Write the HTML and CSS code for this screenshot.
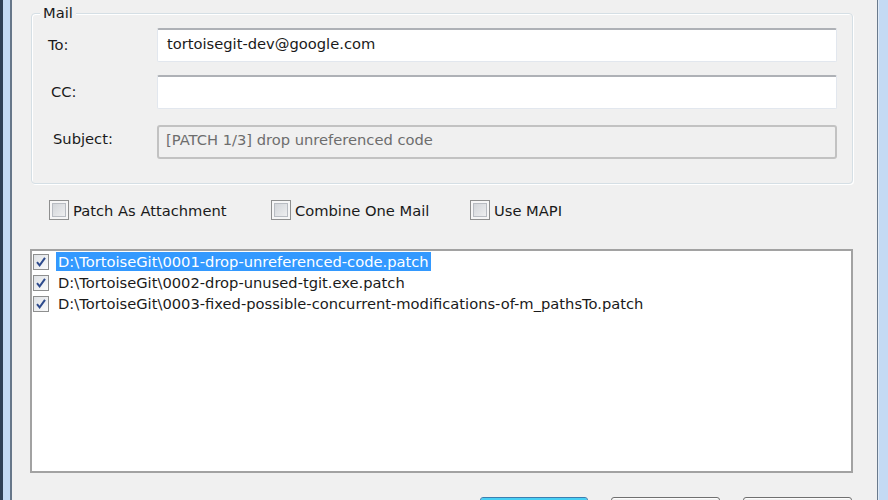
FILE: index.html
```html
<!DOCTYPE html>
<html>
<head>
<meta charset="utf-8">
<link rel="stylesheet" href="styles.css">
</head>
<body>
<div class="window">
  <div class="edge-left"></div>
  <div class="dialog">
    <div class="group">
      <span class="legend">Mail</span>
      <div class="row row-to">
        <span class="label label-to">To:</span>
        <div class="input">tortoisegit-dev@google.com</div>
      </div>
      <div class="row row-cc">
        <span class="label label-cc">CC:</span>
        <div class="input"></div>
      </div>
      <div class="row row-subject">
        <span class="label label-subject">Subject:</span>
        <div class="input disabled">[PATCH 1/3] drop unreferenced code</div>
      </div>
    </div>
    <div class="options">
      <label class="opt opt-1"><span class="cb"></span>Patch As Attachment</label>
      <label class="opt opt-2"><span class="cb"></span>Combine One Mail</label>
      <label class="opt opt-3"><span class="cb"></span>Use MAPI</label>
    </div>
    <div class="list">
      <div class="item">
        <span class="lcb"><svg width="14" height="14" viewBox="0 0 14 14"><path d="M3 7.2 L5.6 10.3 L11 2.8" fill="none" stroke="#2d4a8c" stroke-width="2"/></svg></span>
        <span class="text selected">D:\TortoiseGit\0001-drop-unreferenced-code.patch</span>
      </div>
      <div class="item">
        <span class="lcb"><svg width="14" height="14" viewBox="0 0 14 14"><path d="M3 7.2 L5.6 10.3 L11 2.8" fill="none" stroke="#2d4a8c" stroke-width="2"/></svg></span>
        <span class="text">D:\TortoiseGit\0002-drop-unused-tgit.exe.patch</span>
      </div>
      <div class="item">
        <span class="lcb"><svg width="14" height="14" viewBox="0 0 14 14"><path d="M3 7.2 L5.6 10.3 L11 2.8" fill="none" stroke="#2d4a8c" stroke-width="2"/></svg></span>
        <span class="text">D:\TortoiseGit\0003-fixed-possible-concurrent-modifications-of-m_pathsTo.patch</span>
      </div>
    </div>
    <div class="buttons">
      <div class="btn default"></div>
      <div class="btn"></div>
      <div class="btn"></div>
    </div>
  </div>
  <div class="edge-right"></div>
</div>
</body>
</html>
```
FILE: styles.css
```css
html, body {
  margin: 0;
  padding: 0;
  width: 888px;
  height: 500px;
  overflow: hidden;
  background: #f0f0f0;
  font-family: "DejaVu Sans", Verdana, sans-serif;
  font-size: 14.7px;
  color: #1a1a1a;
}

.window {
  display: flex;
  height: 500px;
}

.edge-left {
  width: 12px;
  flex: none;
  background: linear-gradient(to right, #2f4055 0 3px, #c4daf3 3px 10px, #66778a 10px 12px);
}

.edge-right {
  width: 11px;
  flex: none;
  background: linear-gradient(to right, #6a7a8c 0 1px, #dfeaf7 1px 2px, #c4daf3 2px 11px);
}

.dialog {
  flex: 1;
  padding: 13px 0 0 19px;
  display: flex;
  flex-direction: column;
}

.dialog > * {
  flex: none;
}

.group {
  position: relative;
  width: 822px;
  height: 171px;
  box-sizing: border-box;
  border: 1px solid #d5dfe5;
  border-radius: 4px;
  box-shadow: inset 1px 1px 0 #fff, 1px 1px 0 #fff;
  padding: 14px 15px 0 16px;
}

.legend {
  position: absolute;
  left: 8px;
  top: -10px;
  padding: 0 3px;
  background: #f0f0f0;
  line-height: 18px;
}

.row {
  display: flex;
  align-items: center;
}

.row-cc { margin-top: 13px; }
.row-subject { margin-top: 16px; }

.label {
  width: 109px;
  flex: none;
}
.label-cc { padding-left: 3px; width: 106px; margin-top: -1px; }
.label-subject { padding-left: 5px; width: 104px; margin-top: -7px; }
.label-to { margin-top: -2px; }

.input {
  width: 680px;
  height: 34px;
  box-sizing: border-box;
  background: #fff;
  border: 1px solid #e2e7ee;
  border-top: 2px solid #aeb1b6;
  border-radius: 2px;
  padding: 0 9px;
  line-height: 28px;
  white-space: nowrap;
}

.input.disabled {
  background: #f0f0f0;
  border: 2px solid #c2c2c2;
  border-radius: 3px;
  color: #6d6d6d;
  width: 682px;
  padding-left: 7px;
  line-height: 25px;
}

.options {
  display: flex;
  margin-top: 14px;
  padding-left: 18px;
  height: 24px;
  align-items: center;
}

.opt {
  display: flex;
  align-items: center;
  gap: 4px;
}
.opt-1 { width: 222px; }
.opt-2 { width: 199px; }

.cb {
  width: 18px;
  height: 18px;
  border: 1px solid #8e8f8f;
  background: linear-gradient(135deg, #cbcfd4, #f5f5f5);
  box-shadow: inset 0 0 0 2px #f6f6f6, inset 0 0 0 3px #b8bcc2;
}

.list {
  margin-top: 27px;
  margin-left: -1px;
  width: 823px;
  height: 224px;
  box-sizing: border-box;
  border: 2px solid #a2a2a2;
  background: #fff;
  padding: 0 0 0 1px;
}

.item {
  display: flex;
  align-items: center;
  height: 21px;
}

.lcb {
  width: 14px;
  height: 14px;
  border: 1px solid #8e8f8f;
  background: linear-gradient(135deg, #dfe2e6, #fafafa);
  display: flex;
  margin-right: 7px;
}

.text {
  padding: 0 2px;
  line-height: 19px;
  white-space: nowrap;
}

.text.selected {
  background: #3399ff;
  color: #fff;
}

.buttons {
  display: flex;
  margin-top: 24px;
  padding-left: 449px;
  gap: 23px;
}

.btn {
  width: 108px;
  height: 26px;
  box-sizing: border-box;
  border: 1px solid #707070;
  border-radius: 3px;
  background: linear-gradient(#f2f2f2, #ebebeb);
  box-shadow: inset 0 0 0 1px #fcfcfc;
}

.btn.default {
  border-color: #3c7fb1;
  box-shadow: inset 0 0 0 2px #48d0f5;
}
.btn:nth-child(2) { width: 109px; }
.btn:nth-child(3) { width: 109px; }
```
